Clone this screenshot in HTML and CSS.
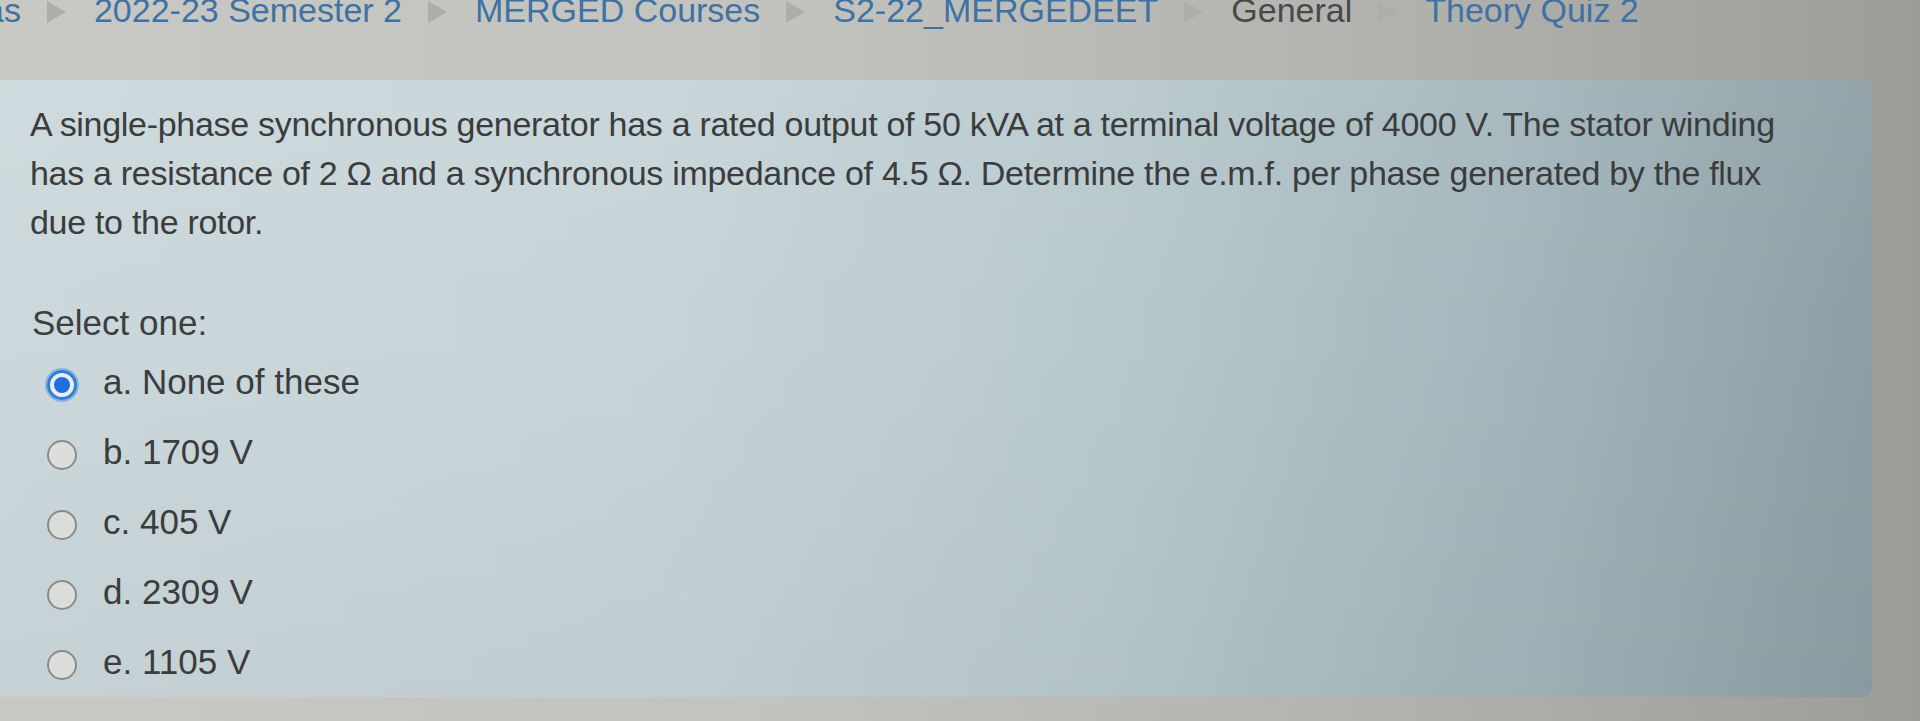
FILE: index.html
```html
<!DOCTYPE html>
<html lang="en">
<head>
<meta charset="utf-8">
<title>Theory Quiz 2</title>
<link rel="stylesheet" href="styles.css">
</head>
<body>
<nav class="crumbs">
  <span class="crumb link first">as</span>
  <span class="sep"></span>
  <span class="crumb link">2022-23 Semester 2</span>
  <span class="sep"></span>
  <span class="crumb link">MERGED Courses</span>
  <span class="sep"></span>
  <span class="crumb link">S2-22_MERGEDEET</span>
  <span class="sep"></span>
  <span class="crumb plain">General</span>
  <span class="sep"></span>
  <span class="crumb link">Theory Quiz 2</span>
</nav>
<main class="panel">
  <p class="qtext">A single-phase synchronous generator has a rated output of 50 kVA at a terminal voltage of 4000 V. The stator winding has a resistance of 2 Ω and a synchronous impedance of 4.5 Ω. Determine the e.m.f. per phase generated by the flux due to the rotor.</p>
  <p class="prompt">Select one:</p>
  <div class="answers">
    <label class="opt"><span class="radio checked"></span><span class="otext">a. None of these</span></label>
    <label class="opt"><span class="radio"></span><span class="otext">b. 1709 V</span></label>
    <label class="opt"><span class="radio"></span><span class="otext">c. 405 V</span></label>
    <label class="opt"><span class="radio"></span><span class="otext">d. 2309 V</span></label>
    <label class="opt"><span class="radio"></span><span class="otext">e. 1105 V</span></label>
  </div>
</main>
</body>
</html>
```
FILE: styles.css
```css
html, body {
  margin: 0;
  padding: 0;
}
body {
  width: 1920px;
  height: 721px;
  overflow: hidden;
  font-family: "Liberation Sans", Arial, sans-serif;
  color: #383b3d;
  background: linear-gradient(90deg, #c8c9c5 0%, #c2c3bf 40%, #b0b1ad 75%, #9c9d99 100%);
}
.crumbs {
  display: flex;
  align-items: center;
  height: 40px;
  margin-top: -10px;
  margin-bottom: 50px;
  font-size: 34px;
  line-height: 40px;
  white-space: nowrap;
}
.crumb.link { color: #3f72a3; }
.crumb.plain { color: #47494b; }
.crumb.first { margin-left: -15px; }
.sep {
  flex: none;
  width: 0;
  height: 0;
  border-top: 11px solid transparent;
  border-bottom: 11px solid transparent;
  border-left: 19px solid #adaeac;
  margin: 4px 28px 0 26px;
}
.panel {
  width: 1872px;
  height: 617px;
  box-sizing: border-box;
  padding: 20px 47px 0 30px;
  border-radius: 0 10px 10px 0;
  background:
    linear-gradient(180deg, rgba(255,255,255,0.06) 0%, rgba(255,255,255,0) 40%, rgba(0,0,0,0.03) 100%),
    linear-gradient(90deg, #ccd8db 0%, #c6d4d8 35%, #b7c8cc 60%, #a2b5ba 82%, #8c9fa4 100%);
}
.qtext {
  margin: 0;
  font-size: 34px;
  line-height: 49px;
  letter-spacing: -0.3px;
  color: #3a3c3e;
}
.prompt {
  margin: 51px 0 0 2px;
  font-size: 35px;
  line-height: 49px;
  color: #3c3e40;
}
.answers {
  display: flex;
  flex-direction: column;
  padding-left: 17px;
}
.opt {
  display: flex;
  align-items: center;
  height: 70px;
  font-size: 35px;
  line-height: 40px;
  color: #3a3c3e;
}
.radio {
  flex: none;
  box-sizing: border-box;
  width: 30px;
  height: 30px;
  border-radius: 50%;
  border: 2px solid #8a8c8c;
  background: #dcdedc;
  margin: 6px 26px 0 0;
  position: relative;
}
.radio.checked {
  border: 3px solid #2f7fd6;
  background: #e8eef2;
  box-shadow: 0 0 0 2px rgba(90, 150, 220, 0.55);
}
.radio.checked::after {
  content: "";
  position: absolute;
  left: 4px;
  top: 4px;
  width: 16px;
  height: 16px;
  border-radius: 50%;
  background: #1d6fe0;
}
```
